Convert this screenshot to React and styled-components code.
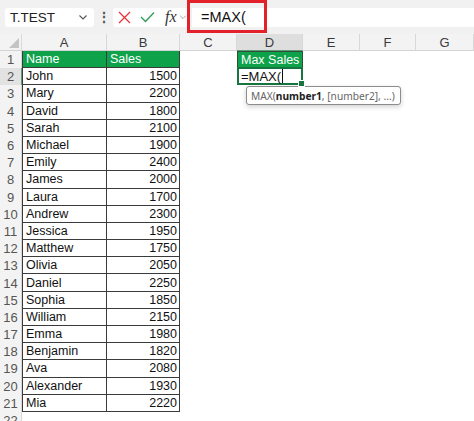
import React from "react";
import styled, { createGlobalStyle } from "styled-components";

const GlobalStyle = createGlobalStyle`
  html, body {
    margin: 0;
    padding: 0;
    background: #ffffff;
    overflow: hidden;
  }
  body {
    font-family: "Liberation Sans", Arial, sans-serif;
  }
`;

const GREEN = "#0ea34b";
const COLS = [
  { key: "A", width: 85 },
  { key: "B", width: 73 },
  { key: "C", width: 57 },
  { key: "D", width: 66 },
  { key: "E", width: 57 },
  { key: "F", width: 56 },
  { key: "G", width: 58 },
];

const data = [
  ["John", 1500],
  ["Mary", 2200],
  ["David", 1800],
  ["Sarah", 2100],
  ["Michael", 1900],
  ["Emily", 2400],
  ["James", 2000],
  ["Laura", 1700],
  ["Andrew", 2300],
  ["Jessica", 1950],
  ["Matthew", 1750],
  ["Olivia", 2050],
  ["Daniel", 2250],
  ["Sophia", 1850],
  ["William", 2150],
  ["Emma", 1980],
  ["Benjamin", 1820],
  ["Ava", 2080],
  ["Alexander", 1930],
  ["Mia", 2220],
];

const Page = styled.div`
  width: 474px;
  height: 421px;
  overflow: hidden;
  background: #ffffff;
`;

const Toolbar = styled.div`
  display: flex;
  align-items: center;
  height: 34px;
  background: #f1f1f1;
  padding-left: 5px;
  position: relative;
`;

const NameBox = styled.div`
  display: flex;
  align-items: center;
  justify-content: space-between;
  width: 89px;
  height: 19px;
  background: #ffffff;
  border-radius: 3px;
  padding: 0 6px 0 5px;
  box-sizing: border-box;
  font-size: 13.5px;
  color: #222;
`;

const Dots = styled.div`
  width: 19px;
  text-align: center;
  color: #555;
  font-size: 14px;
  font-weight: bold;
`;

const ActionBox = styled.div`
  display: flex;
  align-items: center;
  gap: 9px;
  width: 76px;
  height: 19px;
  background: #ffffff;
  border-radius: 3px;
  padding-left: 5px;
  box-sizing: border-box;
`;

const FxGroup = styled.span`
  display: flex;
  align-items: center;
  gap: 2px;
`;

const Fx = styled.span`
  font-family: "Liberation Serif", "Times New Roman", serif;
  font-style: italic;
  font-size: 16px;
  color: #333;
  margin-left: 1px;
`;

const FormulaField = styled.div`
  flex: 1;
  height: 19px;
  margin-left: 3px;
  background: #ffffff;
  display: flex;
  align-items: center;
  padding-left: 9px;
  font-size: 14.5px;
  color: #111;
  position: relative;
`;

const Annotation = styled.div`
  position: absolute;
  left: -5px;
  top: -8px;
  width: 80px;
  height: 33px;
  border: 3px solid #e3212b;
  box-sizing: border-box;
`;

const Sheet = styled.div`
  display: grid;
  grid-template-columns: 22px ${COLS.map((c) => `${c.width}px`).join(" ")};
  grid-template-rows: 17px;
  grid-auto-rows: 17.2px;
`;

const Corner = styled.div`
  background: #f3f3f3;
  position: relative;
  border-right: 1px solid #dadada;
  border-bottom: 1px solid #d4d4d4;
  box-sizing: border-box;
  &:after {
    content: "";
    position: absolute;
    right: 2px;
    bottom: 2px;
    border-style: solid;
    border-width: 0 0 10px 10px;
    border-color: transparent transparent #c4c4c4 transparent;
  }
`;

const ColHead = styled.div`
  background: ${(p) => (p.$active ? "#dedede" : "#f3f3f3")};
  border-right: 1px solid #d8d8d8;
  border-bottom: 1px solid ${(p) => (p.$active ? "#5e9c76" : "#d4d4d4")};
  box-sizing: border-box;
  display: flex;
  align-items: center;
  justify-content: center;
  font-size: 13px;
  color: #3a3a3a;
`;

const RowHead = styled.div`
  background: ${(p) => (p.$active ? "#e2e2e2" : "#f3f3f3")};
  border-right: 1px solid ${(p) => (p.$active ? "#5e9c76" : "#d8d8d8")};
  box-sizing: border-box;
  display: flex;
  align-items: center;
  justify-content: center;
  font-size: 13px;
  color: #555;
`;

const Cell = styled.div`
  box-sizing: border-box;
  display: flex;
  align-items: center;
  justify-content: ${(p) => (p.$right ? "flex-end" : "flex-start")};
  padding: 0 2px 0 3px;
  font-size: 12.5px;
  color: ${(p) => (p.$fill ? "#ffffff" : "#111")};
  background: ${(p) => (p.$fill ? GREEN : "transparent")};
  border-right: ${(p) => (p.$boxed ? "1px solid #3b3b3b" : "none")};
  border-bottom: ${(p) => (p.$boxed ? "1px solid #3b3b3b" : "none")};
  border-left: ${(p) => (p.$first ? "1px solid #3b3b3b" : "none")};
  white-space: nowrap;
  overflow: visible;
`;

const TitleCell = styled(Cell)`
  border: 1px solid #2f4f3a;
`;

const ActiveCell = styled.div`
  position: relative;
  box-sizing: border-box;
  border: 2px solid #17763f;
  margin-top: -1px;
  display: flex;
  align-items: center;
  padding-left: 2px;
  font-size: 13px;
  color: #111;
  z-index: 2;
  &:after {
    content: "";
    position: absolute;
    right: -4px;
    bottom: -4px;
    width: 5px;
    height: 5px;
    background: #17763f;
    border: 1px solid #fff;
  }
`;

const Caret = styled.span`
  display: inline-block;
  width: 1px;
  height: 14px;
  background: #111;
  margin-left: 1px;
`;

const Tooltip = styled.div`
  position: absolute;
  left: 7px;
  top: 17px;
  height: 17px;
  padding: 0 5px 0 4px;
  display: flex;
  align-items: center;
  background: #ffffff;
  border: 1px solid #8c8c8c;
  border-radius: 3px;
  box-shadow: 0 2px 5px rgba(0, 0, 0, 0.18);
  font-family: "Noto Sans", "Open Sans", sans-serif;
  font-size: 10.2px;
  color: #666;
  white-space: nowrap;
  b {
    color: #222;
    font-weight: 700;
  }
`;

const Chevron = ({ size = 9, color = "#555" }) => (
  <svg width={size} height={size} viewBox="0 0 10 10">
    <path d="M1.5 3.5 L5 7 L8.5 3.5" fill="none" stroke={color} strokeWidth="1.1" />
  </svg>
);

const CrossIcon = () => (
  <svg width="13" height="13" viewBox="0 0 13 13">
    <path d="M1 1 L12 12 M12 1 L1 12" stroke="#e5343c" strokeWidth="1.3" fill="none" />
  </svg>
);

const CheckIcon = () => (
  <svg width="15" height="12" viewBox="0 0 15 12">
    <path d="M1 6 L5.5 10.5 L14 1.5" stroke="#2e9b55" strokeWidth="1.3" fill="none" />
  </svg>
);

const renderTableCell = (r, c) => {
  const header = r === 1;
  const item = data[r - 2];
  if (c === 0) {
    return (
      <Cell key={c} $boxed $first $fill={header}>
        {header ? "Name" : item[0]}
      </Cell>
    );
  }
  return (
    <Cell key={c} $boxed $fill={header} $right={!header}>
      {header ? "Sales" : item[1]}
    </Cell>
  );
};

const renderRow = (r) => {
  const cells = COLS.map((col, c) => {
    if (c < 2 && r <= 21) return renderTableCell(r, c);
    if (col.key === "D" && r === 1) {
      return (
        <TitleCell key={c} $fill>
          Max Sales
        </TitleCell>
      );
    }
    if (col.key === "D" && r === 2) {
      return (
        <ActiveCell key={c}>
          =MAX(
          <Caret />
          <Tooltip>
            MAX(<b>number1</b>, [number2], ...)
          </Tooltip>
        </ActiveCell>
      );
    }
    return <Cell key={c} />;
  });
  return (
    <React.Fragment key={r}>
      <RowHead $active={r === 2}>{r}</RowHead>
      {cells}
    </React.Fragment>
  );
};

const App = () => {
  const rows = Array.from({ length: 23 }, (_, i) => i + 1);
  return (
    <Page>
      <GlobalStyle />
      <Toolbar>
        <NameBox>
          <span>T.TEST</span>
          <Chevron size={10} />
        </NameBox>
        <Dots>⋮</Dots>
        <ActionBox>
          <CrossIcon />
          <CheckIcon />
          <FxGroup>
            <Fx>fx</Fx>
            <Chevron size={8} color="#999" />
          </FxGroup>
        </ActionBox>
        <FormulaField>
          =MAX(
          <Annotation />
        </FormulaField>
      </Toolbar>
      <Sheet>
        <Corner />
        {COLS.map((col) => (
          <ColHead key={col.key} $active={col.key === "D"}>
            {col.key}
          </ColHead>
        ))}
        {rows.map(renderRow)}
      </Sheet>
    </Page>
  );
};

export default App;
